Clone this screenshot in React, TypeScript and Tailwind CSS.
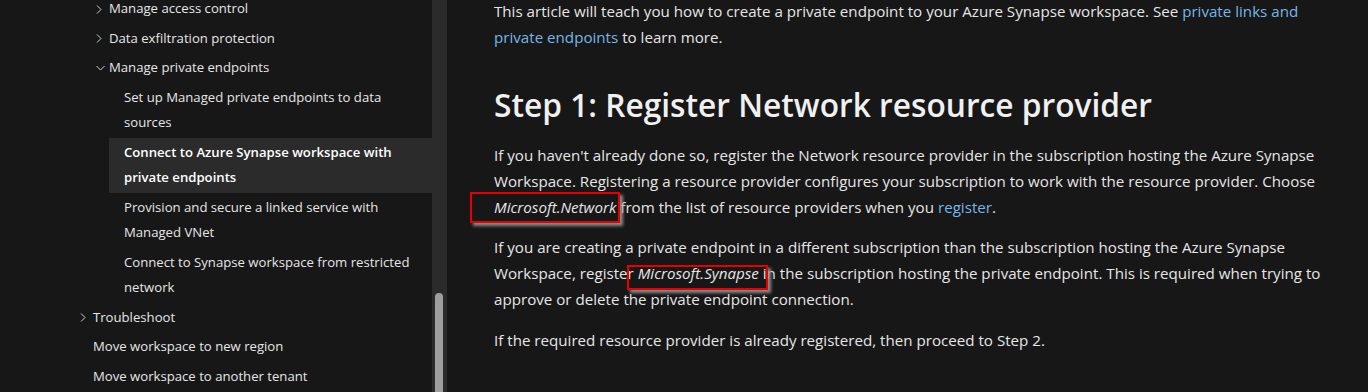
import React from 'react';

const font = { fontFamily: '"Open Sans", "Noto Sans", sans-serif' };

function ChevronRight() {
  return (
    <svg width="6" height="9" viewBox="0 0 6 9" className="shrink-0">
      <path d="M1 0.5 L5 4.5 L1 8.5" fill="none" stroke="#cfcfcf" strokeWidth="1" />
    </svg>
  );
}

function ChevronDown() {
  return (
    <svg width="9" height="6" viewBox="0 0 9 6" className="shrink-0">
      <path d="M0.5 1 L4.5 5 L8.5 1" fill="none" stroke="#cfcfcf" strokeWidth="1" />
    </svg>
  );
}

type NavItem = {
  label: React.ReactNode;
  level: 1 | 2 | 3;
  chevron?: 'right' | 'down';
  selected?: boolean;
};

const navItems: NavItem[] = [
  { label: 'Manage access control', level: 2, chevron: 'right' },
  { label: 'Data exfiltration protection', level: 2, chevron: 'right' },
  { label: 'Manage private endpoints', level: 2, chevron: 'down' },
  { label: <>Set up Managed private endpoints to data<br />sources</>, level: 3 },
  { label: <>Connect to Azure Synapse workspace with<br />private endpoints</>, level: 3, selected: true },
  { label: <>Provision and secure a linked service with<br />Managed VNet</>, level: 3 },
  { label: <>Connect to Synapse workspace from restricted<br />network</>, level: 3 },
  { label: 'Troubleshoot', level: 1, chevron: 'right' },
  { label: 'Move workspace to new region', level: 1 },
  { label: 'Move workspace to another tenant', level: 1 },
];

function NavRow({ item }: { item: NavItem }) {
  const indent = item.level === 1 ? 'pl-[93px]' : item.level === 2 ? 'pl-[109px]' : 'ml-[109px] pl-[15px]';
  const chevronPos = item.level === 1 ? 'left-[80px]' : 'left-[96px]';
  return (
    <div
      className={`relative py-[2px] leading-[25.5px] ${indent} ${
        item.selected ? 'bg-[#2b2b2b] font-semibold text-white' : 'text-[#e6e6e6]'
      }`}
    >
      {item.chevron && (
        <span className={`absolute top-0 bottom-0 flex items-center ${chevronPos}`}>
          {item.chevron === 'right' ? <ChevronRight /> : <ChevronDown />}
        </span>
      )}
      {item.label}
    </div>
  );
}

function Boxed({ children, inset }: { children: React.ReactNode; inset: string }) {
  return (
    <span className="relative inline-block">
      <span
        className={`pointer-events-none absolute border-2 border-[#e80000] shadow-[3px_3px_3px_rgba(150,150,150,0.9)] ${inset}`}
      />
      <em>{children}</em>
    </span>
  );
}

export default function App() {
  return (
    <div className="flex h-[392px] w-[1368px] overflow-hidden bg-[#171717]" style={font}>
      {/* Sidebar */}
      <aside className="w-[432px] shrink-0 overflow-hidden text-[13.15px]">
        <div className="-mt-[5.75px]">
          {navItems.map((item, i) => (
            <NavRow key={i} item={item} />
          ))}
        </div>
      </aside>

      {/* Scrollbar */}
      <div className="flex w-[15px] shrink-0 flex-col bg-[#2b2b2b] pl-[3px] pr-[4px] pt-[293px]">
        <div className="flex-1 rounded-t-full bg-[#9e9e9e]" />
      </div>

      {/* Article */}
      <main className="flex-1 pl-[47px] text-[15.15px] leading-[26px] text-[#e6e6e6]">
        <p className="-mt-[2px]">
          This article will teach you how to create a private endpoint to your Azure Synapse workspace. See{' '}
          <a className="text-[#75b6e7]">private links and</a>
          <br />
          <a className="text-[#75b6e7]">private endpoints</a> to learn more.
        </p>

        <h2 className="mt-[35px] text-[31.7px] font-semibold leading-[40px] text-[#f0f0f0]">
          Step 1: Register Network resource provider
        </h2>

        <p className="mt-[17px]">
          If you haven't already done so, register the Network resource provider in the subscription hosting the Azure Synapse
          <br />
          Workspace. Registering a resource provider configures your subscription to work with the resource provider. Choose
          <br />
          <Boxed inset="-left-[24px] -right-[4px] -top-[2px] -bottom-[3px]">Microsoft.Network</Boxed> from the list of resource
          providers when you <a className="text-[#75b6e7]">register</a>.
        </p>

        <p className="mt-[14px]">
          If you are creating a private endpoint in a different subscription than the subscription hosting the Azure Synapse
          <br />
          Workspace, register{' '}
          <Boxed inset="-left-[11px] -right-[9px] top-[5px] -bottom-[4px]">Microsoft.Synapse</Boxed> in the subscription
          hosting the private endpoint. This is required when trying to
          <br />
          approve or delete the private endpoint connection.
        </p>

        <p className="mt-[15px]">If the required resource provider is already registered, then proceed to Step 2.</p>
      </main>
    </div>
  );
}
